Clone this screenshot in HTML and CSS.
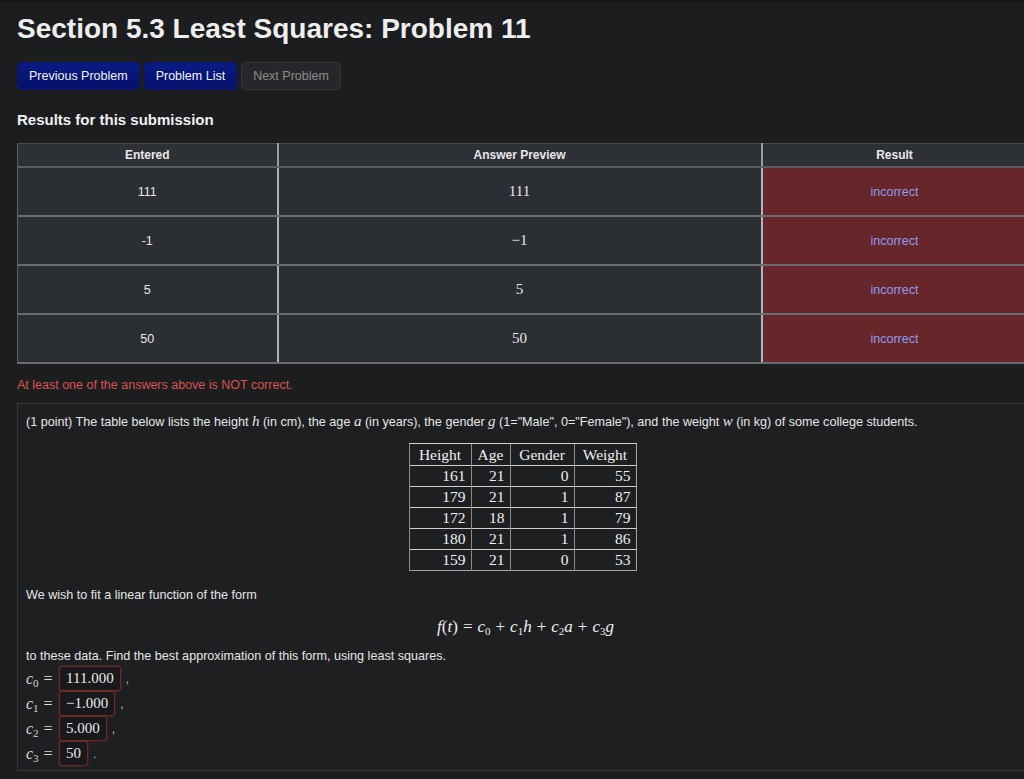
FILE: index.html
```html
<!DOCTYPE html>
<html>
<head>
<meta charset="utf-8">
<link rel="stylesheet" href="styles.css">
</head>
<body>
<div class="page">
  <h1 class="title">Section 5.3 Least Squares: Problem 11</h1>
  <div class="nav">
    <span class="btn btn-primary">Previous Problem</span>
    <span class="btn btn-primary">Problem List</span>
    <span class="btn btn-disabled">Next Problem</span>
  </div>
  <h2 class="subtitle">Results for this submission</h2>
  <table class="results">
    <colgroup><col class="c1"><col class="c2"><col class="c3"></colgroup>
    <thead>
      <tr><th>Entered</th><th>Answer Preview</th><th>Result</th></tr>
    </thead>
    <tbody>
      <tr><td>111</td><td class="preview">111</td><td class="bad">incorrect</td></tr>
      <tr><td>-1</td><td class="preview">&minus;1</td><td class="bad">incorrect</td></tr>
      <tr><td>5</td><td class="preview">5</td><td class="bad">incorrect</td></tr>
      <tr><td>50</td><td class="preview">50</td><td class="bad">incorrect</td></tr>
    </tbody>
  </table>
  <p class="warn">At least one of the answers above is NOT correct.</p>
  <div class="problem">
    <p class="intro">(1 point) The table below lists the height <i class="m">h</i> (in cm), the age <i class="m">a</i> (in years), the gender <i class="m">g</i> (1="Male", 0="Female"), and the weight <i class="m">w</i> (in kg) of some college students.</p>
    <div class="data-wrap">
      <table class="data">
        <tr><th>Height</th><th>Age</th><th>Gender</th><th>Weight</th></tr>
        <tr><td>161</td><td>21</td><td>0</td><td>55</td></tr>
        <tr><td>179</td><td>21</td><td>1</td><td>87</td></tr>
        <tr><td>172</td><td>18</td><td>1</td><td>79</td></tr>
        <tr><td>180</td><td>21</td><td>1</td><td>86</td></tr>
        <tr><td>159</td><td>21</td><td>0</td><td>53</td></tr>
      </table>
    </div>
    <p class="text">We wish to fit a linear function of the form</p>
    <div class="formula"><i>f</i>(<i>t</i>)<span class="op">=</span><i>c</i><sub>0</sub><span class="op">+</span><i>c</i><sub>1</sub><i>h</i><span class="op">+</span><i>c</i><sub>2</sub><i>a</i><span class="op">+</span><i>c</i><sub>3</sub><i>g</i></div>
    <p class="text">to these data. Find the best approximation of this form, using least squares.</p>
    <div class="answers">
      <div class="ans"><span class="lbl"><i>c</i><sub>0</sub><span class="eq">=</span></span><span class="box">111.000</span><span class="punct">,</span></div>
      <div class="ans"><span class="lbl"><i>c</i><sub>1</sub><span class="eq">=</span></span><span class="box">&minus;1.000</span><span class="punct">,</span></div>
      <div class="ans"><span class="lbl"><i>c</i><sub>2</sub><span class="eq">=</span></span><span class="box">5.000</span><span class="punct">,</span></div>
      <div class="ans"><span class="lbl"><i>c</i><sub>3</sub><span class="eq">=</span></span><span class="box">50</span><span class="punct">.</span></div>
    </div>
  </div>
</div>
</body>
</html>
```

FILE: styles.css
```css
html, body {
  margin: 0;
  padding: 0;
  background: #1c1d1f;
  overflow: hidden;
}
body {
  font-family: "Liberation Sans", Arial, sans-serif;
  color: #e6e6e6;
  border-top: 2px solid #151618;
}
.page {
  padding: 0 0 0 17px;
  width: 1030px;
}
.title {
  margin: 7px 0 0 0;
  font-size: 28px;
  line-height: 40px;
  font-weight: bold;
  color: #eeeeee;
}
.nav {
  display: flex;
  gap: 4px;
  margin-top: 13px;
}
.btn {
  display: block;
  font-size: 12.5px;
  line-height: 14px;
  padding: 6px 11px;
  border-radius: 4px;
}
.btn-primary {
  background: linear-gradient(#0b1b84, #04106a);
  color: #f2f2f2;
  border: 1px solid #0a1770;
}
.btn-disabled {
  background: #25272a;
  color: #8c8c8c;
  border: 1px solid #34363a;
}
.subtitle {
  margin: 21px 0 0 0;
  font-size: 15px;
  line-height: 18px;
  font-weight: bold;
  color: #f0f0f0;
}
.results {
  margin-top: 14px;
  border-collapse: collapse;
  width: 1010px;
  table-layout: fixed;
  font-size: 12.5px;
  border-left: 1px solid #5f6165;
  border-bottom: 1px solid #8a8c90;
}
.results .c1 { width: 260px; }
.results .c2 { width: 484px; }
.results .c3 { width: 266px; }
.results th {
  background: #2d3034;
  color: #e8e8e8;
  font-weight: bold;
  font-size: 12px;
  height: 22px;
  padding: 0;
  border-top: 1px solid #4a4c50;
  border-bottom: 2px solid #5a5d61;
  border-right: 2px solid #9a9c9f;
  text-align: center;
}
.results td {
  background: #2b2e32;
  height: 47px;
  padding: 0;
  text-align: center;
  color: #e8e8e8;
  border-bottom: 2px solid #6a6c70;
  border-right: 2px solid #b0b2b5;
}
.results td.preview {
  font-family: "Liberation Serif", "Times New Roman", serif;
  font-size: 15px;
}
.results td.bad {
  background: #66262a;
  color: #8f9cf0;
}
.warn {
  margin: 14px 0 0 0;
  font-size: 12.5px;
  line-height: 14px;
  color: #d9534f;
}
.problem {
  margin-top: 11px;
  border: 1px solid #36383b;
  background: #1e1f21;
  padding: 8px 8px 8px 8px;
  height: 350px;
}
.intro, .text {
  margin: 0;
  font-size: 12.6px;
  line-height: 19px;
  color: #e6e6e6;
}
.m {
  font-family: "Liberation Serif", "Times New Roman", serif;
  font-size: 15px;
}
.data-wrap {
  display: flex;
  justify-content: center;
  margin-top: 11px;
  margin-bottom: 15px;
  width: 1007px;
  padding-right: 14px;
  box-sizing: border-box;
}
.data {
  border-collapse: collapse;
  font-family: "Liberation Serif", "Times New Roman", serif;
  font-size: 15.5px;
  color: #f0f0f0;
  border: 1px solid #a5a5a5;
}
.data th, .data td {
  padding: 0 5px;
  height: 20px;
  border-left: 1px solid #8a8a8a;
  border-top: 1px solid #d0d0d0;
  text-align: right;
  font-weight: normal;
}
.data th { text-align: center; padding: 0 5px; height: 21px; }
.data th:first-child { width: 51px; }
.data th:nth-child(2) { width: 28px; }
.data th:nth-child(3) { width: 53px; }
.data th:nth-child(4) { width: 51px; }
.formula {
  width: 1007px;
  padding-right: 8px;
  box-sizing: border-box;
  text-align: center;
  font-family: "Liberation Serif", "Times New Roman", serif;
  font-size: 17px;
  color: #eeeeee;
  line-height: 20px;
  margin: 12px 0 10px 0;
}
.op {
  margin: 0 5px;
}
.formula sub, .lbl sub {
  font-size: 11px;
  vertical-align: -3px;
  line-height: 0;
}
.answers {
  display: flex;
  flex-direction: column;
  margin-top: 0;
}
.ans {
  display: flex;
  align-items: center;
  height: 25px;
}
.lbl {
  font-family: "Liberation Serif", "Times New Roman", serif;
  font-size: 16px;
  color: #d8d8d8;
  width: 33px;
}
.eq {
  margin-left: 5px;
}
.box {
  font-family: "Liberation Serif", "Times New Roman", serif;
  font-size: 15px;
  color: #e8e8e8;
  background: #18191b;
  border: 1px solid #6a2a2c;
  box-shadow: 0 0 2px #7a2e30;
  border-radius: 3px;
  padding: 0 6px;
  line-height: 23px;
}
.punct {
  font-size: 12px;
  color: #bbbbbb;
  margin-left: 5px;
}
```
